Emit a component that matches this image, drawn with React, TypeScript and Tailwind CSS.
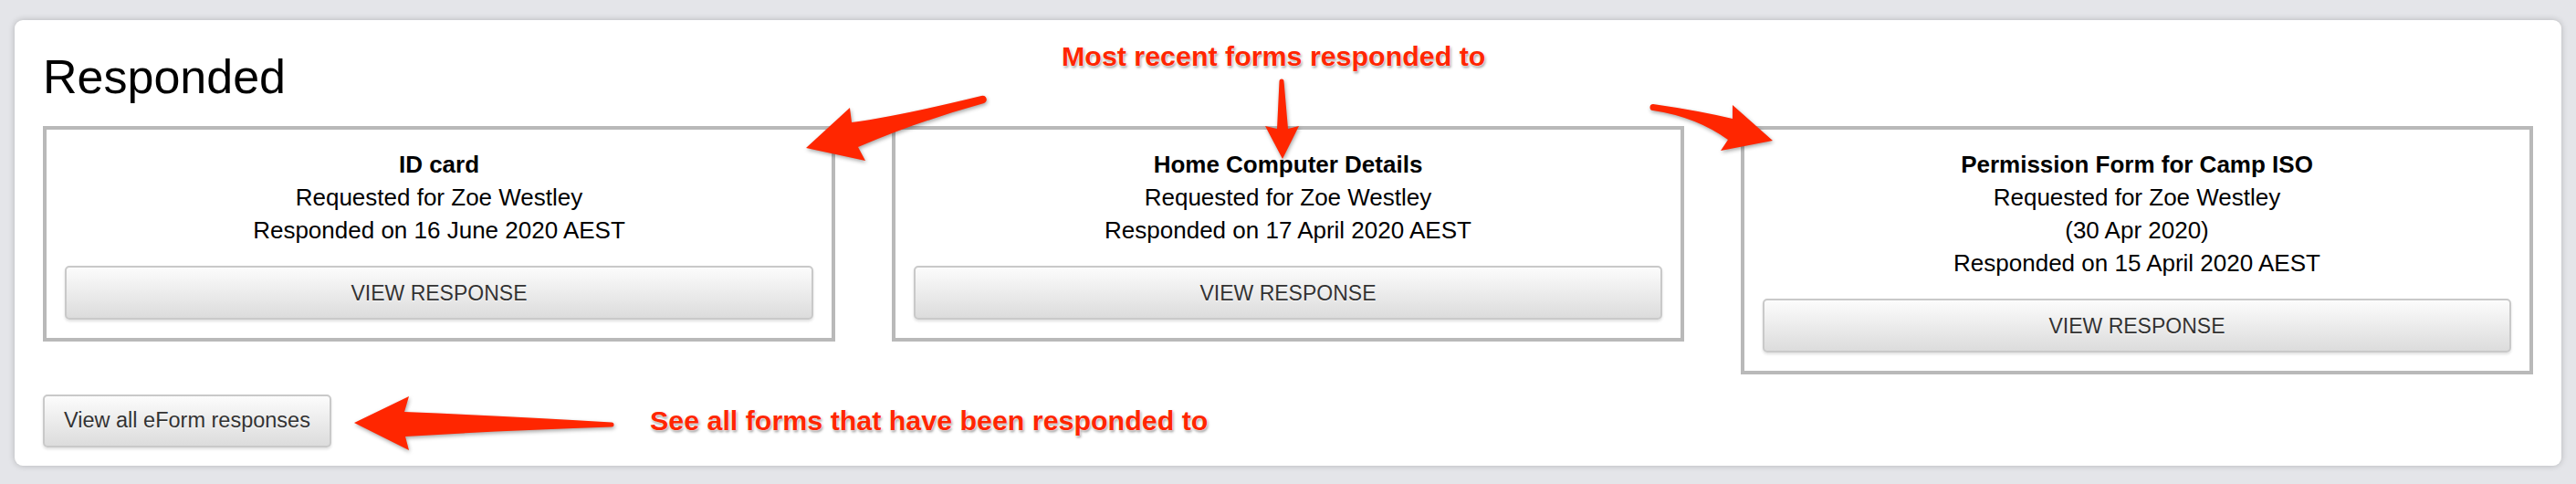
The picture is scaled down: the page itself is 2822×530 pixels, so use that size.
import React from "react";

type Card = { title: string; lines: string[] };

const cards: Card[] = [
  { title: "ID card", lines: ["Requested for Zoe Westley", "Responded on 16 June 2020 AEST"] },
  { title: "Home Computer Details", lines: ["Requested for Zoe Westley", "Responded on 17 April 2020 AEST"] },
  {
    title: "Permission Form for Camp ISO",
    lines: ["Requested for Zoe Westley", "(30 Apr 2020)", "Responded on 15 April 2020 AEST"],
  },
];

function FormCard({ card }: { card: Card }) {
  return (
    <div className="border-4 border-[#b9b9b9] bg-white p-5 text-center text-[26px] leading-[36px] text-black">
      <div className="font-bold">{card.title}</div>
      {card.lines.map((l) => (
        <div key={l}>{l}</div>
      ))}
      <button className="mt-[21px] flex h-[59px] w-full items-center justify-center rounded-[5px] border-2 border-[#c9c9c9] bg-linear-to-b from-[#fcfcfc] to-[#dcdcdc] text-[23px] text-[#333333] shadow-[0_2px_3px_rgba(0,0,0,0.12)] [text-shadow:0_1px_1px_rgba(255,255,255,0.75)]">
        VIEW RESPONSE
      </button>
    </div>
  );
}

export default function App() {
  return (
    <div className="relative h-[530px] w-[2822px] overflow-hidden bg-[#e4e5e9] px-4 pt-[22px] font-['Liberation_Sans',Arial,sans-serif]">
      <div className="rounded-[9px] bg-white px-[31px] pb-[20px] pt-[34px] shadow-[0_0_7px_rgba(0,0,0,0.22)]">
        <h2 className="text-[52px] leading-[57px] text-black">Responded</h2>
        <div className="mt-[25px] grid grid-cols-3 items-start gap-[62px]">
          {cards.map((c) => (
            <FormCard key={c.title} card={c} />
          ))}
        </div>
        <button className="mt-[22px] flex h-[58px] items-center rounded-[5px] border-2 border-[#c9c9c9] bg-linear-to-b from-[#fcfcfc] to-[#dcdcdc] px-[21px] text-[23.5px] text-[#333333] shadow-[0_2px_3px_rgba(0,0,0,0.12)] [text-shadow:0_1px_1px_rgba(255,255,255,0.75)]">
          View all eForm responses
        </button>
      </div>

      {/* annotation arrows */}
      <svg
        className="pointer-events-none absolute left-0 top-0 drop-shadow-[1px_2px_2px_rgba(0,0,0,0.35)]"
        width="2822"
        height="530"
        viewBox="0 0 2822 530"
      >
        <g fill="#ff2600">
          <path d="M 883 162 L 931 118 L 933 134 Q 985 127 1075 105 A 4 4 0 0 1 1078 113 Q 1005 133 940 161 L 948 176 Z" />
          <path d="M 1401.5 89 A 2.5 2.5 0 0 1 1406.5 89 L 1411 141 L 1423 138 L 1405 174 L 1386 138 L 1399 141 Z" />
          <path d="M 1811 114 Q 1860 121 1898 130 L 1898 115 L 1942 154 L 1885 165 L 1893 153 Q 1858 128 1811 121 A 3.5 3.5 0 0 1 1811 114 Z" />
          <path d="M 388 463 L 448 434 L 443 451 Q 560 456 670 462.5 A 2.5 2.5 0 0 1 670 467.5 Q 560 471 444 478 L 448 493 Z" />
        </g>
      </svg>

      {/* annotation labels */}
      <div className="absolute left-[1163px] top-[46px] whitespace-nowrap text-[30.4px] font-bold leading-[30px] text-[#ff2600] [text-shadow:0_0_2px_#fff,0_0_2px_#fff,1px_2px_3px_rgba(0,0,0,0.45)]">
        Most recent forms responded to
      </div>
      <div className="absolute left-[712px] top-[445px] whitespace-nowrap text-[30.4px] font-bold leading-[30px] text-[#ff2600] [text-shadow:0_0_2px_#fff,0_0_2px_#fff,1px_2px_3px_rgba(0,0,0,0.45)]">
        See all forms that have been responded to
      </div>
    </div>
  );
}
